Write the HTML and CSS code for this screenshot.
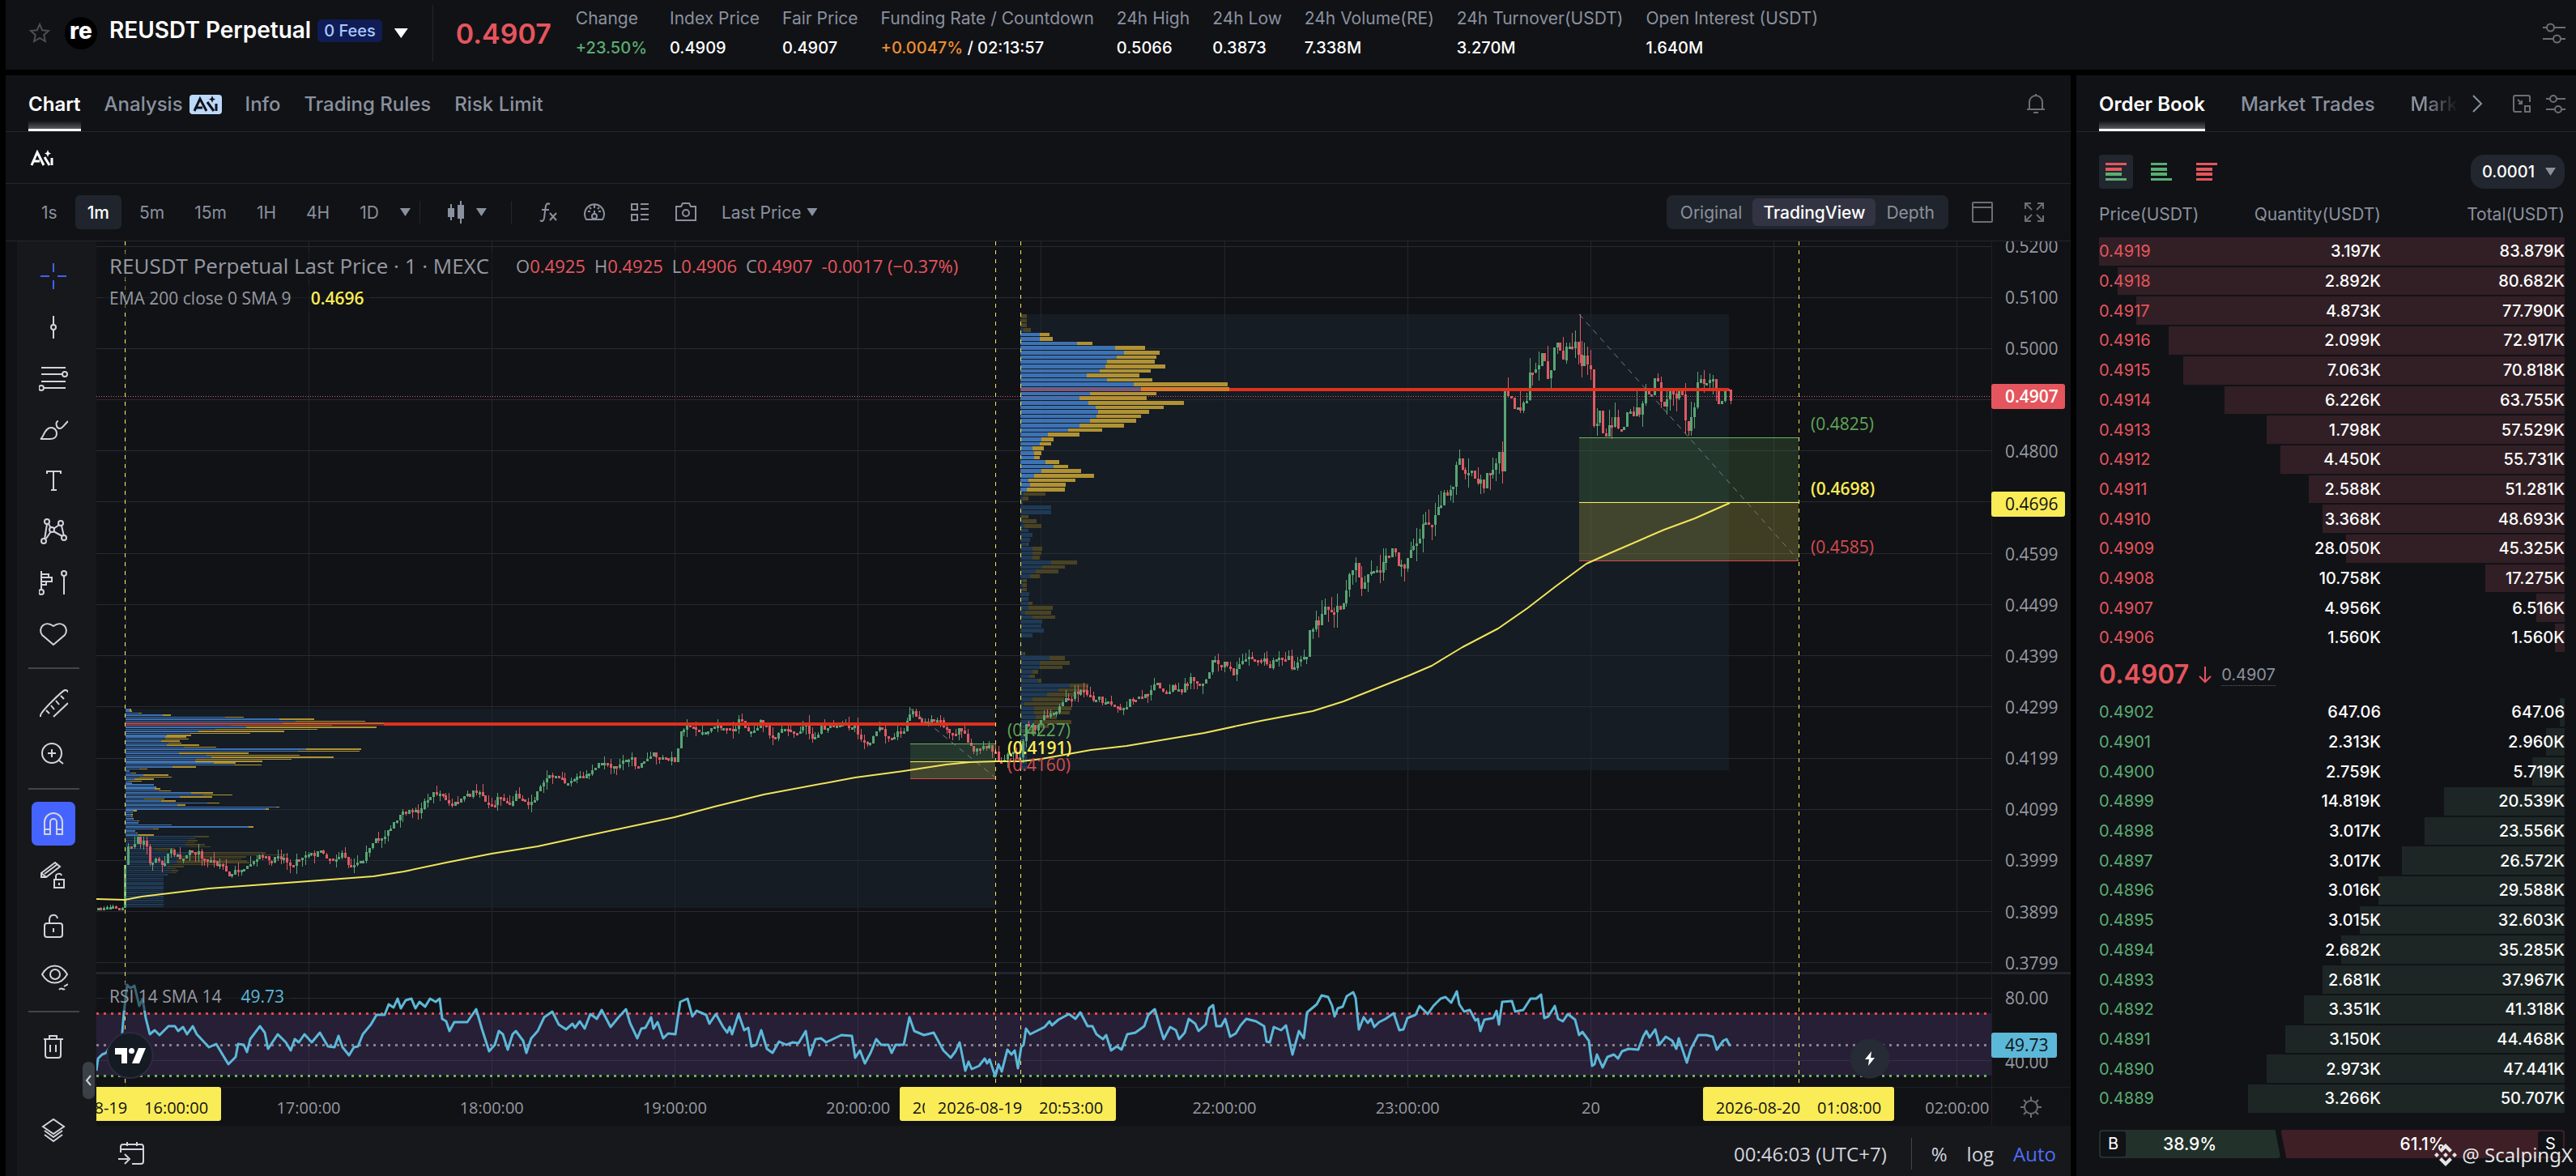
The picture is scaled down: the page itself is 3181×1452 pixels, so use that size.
FILE: index.html
```html
<!DOCTYPE html>
<html lang="en">
<head>
  <meta charset="utf-8">
  <title>REUSDT Perpetual</title>
  <link rel="stylesheet" href="styles.css">
</head>
<body>
  <header class="ticker">
    <button class="icon-btn star" aria-label="Favorite">
      <svg width="28" height="28" viewBox="0 0 28 28"><path d="M14 3l3.2 7.2 7.8.8-5.8 5.2 1.7 7.8-6.9-4-6.9 4 1.7-7.8L3 11l7.8-.8z" fill="none" stroke="#4b4e55" stroke-width="2"/></svg>
    </button>
    <span class="coin">re</span>
    <h1 class="pair">REUSDT Perpetual</h1>
    <span class="fees">0 Fees</span>
    <span class="caret caret-lg"></span>
    <span class="rule"></span>
    <strong class="last">0.4907</strong>
    <dl class="stats">
      <div><dt>Change</dt><dd class="up">+23.50%</dd></div>
      <div><dt>Index Price</dt><dd>0.4909</dd></div>
      <div><dt>Fair Price</dt><dd>0.4907</dd></div>
      <div><dt>Funding Rate / Countdown</dt><dd><span class="orange">+0.0047%</span> / 02:13:57</dd></div>
      <div><dt>24h High</dt><dd>0.5066</dd></div>
      <div><dt>24h Low</dt><dd>0.3873</dd></div>
      <div><dt>24h Volume(RE)</dt><dd>7.338M</dd></div>
      <div><dt>24h Turnover(USDT)</dt><dd>3.270M</dd></div>
      <div><dt>Open Interest (USDT)</dt><dd>1.640M</dd></div>
    </dl>
    <button class="icon-btn push" aria-label="Settings">
      <svg width="28" height="28" viewBox="0 0 28 28" fill="none" stroke="#6b6e76" stroke-width="2"><path d="M0 7h5M14 7h14M0 21h13M22 21h6"/><circle cx="9.500" cy="7" r="4.500"/><circle cx="17.500" cy="21" r="4.500"/></svg>
    </button>
  </header>

  <main class="layout">
    <section class="panel chart-panel">
      <nav class="tabs">
        <a href="#" class="tab active">Chart</a>
        <a href="#" class="tab">Analysis
          <svg class="ai-badge" width="40" height="24" viewBox="0 0 40 24"><rect width="40" height="24" rx="4" fill="#bcd9fb"/><path d="M6 20L13 5l8 15M9 16h7M22 9l8 11M33 11v9" fill="none" stroke="#111216" stroke-width="3"/><path d="M28 1l1.200 3.300L32 5.500l-2.800 1.200L28 10l-1.200-3.300L24 5.500l2.800-1.200z" fill="#111216"/></svg>
        </a>
        <a href="#" class="tab">Info</a>
        <a href="#" class="tab">Trading Rules</a>
        <a href="#" class="tab">Risk Limit</a>
        <button class="icon-btn push bell" aria-label="Alerts">
          <svg width="26" height="26" viewBox="0 0 26 26" fill="none" stroke="#6b6e76" stroke-width="2"><path d="M2 20h22M5 20V11a8 8 0 0 1 16 0v9M10 24h6M13 1v2"/></svg>
        </button>
      </nav>

      <div class="ai-row">
        <svg width="30" height="20" viewBox="0 0 30 20"><path d="M2 19L9 3l8 16M5 14h7M18 9l6 10M27 10v9" fill="none" stroke="#fff" stroke-width="3"/><path d="M22 0l1.200 3.300L26 4.500l-2.800 1.200L22 9l-1.200-3.300L18 4.500l2.800-1.200z" fill="#fff"/></svg>
      </div>

      <div class="toolbar">
        <div class="intervals">
          <button>1s</button>
          <button class="on">1m</button>
          <button>5m</button>
          <button>15m</button>
          <button>1H</button>
          <button>4H</button>
          <button>1D</button>
          <span class="caret"></span>
        </div>
        <span class="bar-rule"></span>
        <button class="kind" aria-label="Candle type">
          <svg width="22" height="28" viewBox="0 0 22 28" fill="#8a919e"><path d="M0 9h8v11H0zM3 4h2v20H3zM12 5h8v17h-8zM15 0h2v28h-2z"/></svg>
          <span class="caret"></span>
        </button>
        <span class="bar-rule"></span>
        <div class="tools">
          <button class="icon-btn" aria-label="Indicators"><svg width="24" height="26" viewBox="0 0 24 26" fill="none" stroke="#8a919e" stroke-width="2"><path d="M13 3c-4-2-5 1-5.500 5L6 20c-.5 4-3 5-5 3M3 10h9M13 14l8 9M21 14l-8 9"/></svg></button>
          <button class="icon-btn" aria-label="Gauge"><svg width="26" height="26" viewBox="0 0 26 26" fill="none" stroke="#8a919e" stroke-width="2"><path d="M3 22a12 12 0 1 1 20 0zM13 4v4M5 12h3M18 12h3M7 7l2 2M19 7l-2 2M13 11v4"/><circle cx="13" cy="18" r="3"/></svg></button>
          <button class="icon-btn" aria-label="List"><svg width="24" height="26" viewBox="0 0 24 26" fill="none" stroke="#8a919e" stroke-width="2"><path d="M2 3h7v7H2zM2 16h7v7H2zM13 3h10M13 9h10M13 16h10M13 22h10"/></svg></button>
          <button class="icon-btn" aria-label="Snapshot"><svg width="28" height="26" viewBox="0 0 28 26" fill="none" stroke="#8a919e" stroke-width="2"><path d="M2 6h6l2-4h8l2 4h6v17H2z"/><circle cx="14" cy="14" r="4"/></svg></button>
        </div>
        <button class="price-kind">Last Price <span class="caret"></span></button>
        <div class="segment push">
          <button>Original</button>
          <button class="on">TradingView</button>
          <button>Depth</button>
        </div>
        <button class="icon-btn window" aria-label="Window"><svg width="28" height="28" viewBox="0 0 28 28" fill="none" stroke="#6b6e76" stroke-width="2"><rect x="2" y="2" width="24" height="24" rx="1"/><path d="M2 8h24"/></svg></button>
        <button class="icon-btn" aria-label="Full screen"><svg width="26" height="26" viewBox="0 0 26 26" fill="none" stroke="#6b6e76" stroke-width="2"><path d="M2 9V2h7M2 2l8 8M24 9V2h-7M24 2l-8 8M2 17v7h7M2 24l8-8M24 17v7h-7M24 24l-8-8"/></svg></button>
      </div>

      <div class="work">
        <aside class="draw">
          <button aria-label="Cross" class="blue"><svg viewBox="0 0 36 36"><path d="M18 2v11M18 23v11M2 18h11M23 18h11"/></svg></button>
          <button aria-label="Trend line"><svg viewBox="0 0 36 36"><path d="M18 4v11M18 21v11"/><circle cx="18" cy="18" r="3"/></svg></button>
          <button aria-label="Fib"><svg viewBox="0 0 36 36"><path d="M3 5h30M3 13h26M3 22h30M6 30h27"/><circle cx="32" cy="13" r="3"/><circle cx="3" cy="30" r="3"/></svg></button>
          <button aria-label="Brush"><svg viewBox="0 0 36 36"><path d="M2 30c4-2 5-14 13-14 4 0 7 3 7 7 0 5-4 7-8 7zM24 8c-4 0-3 9 2 9 3 0 4-3 10-9"/></svg></button>
          <button aria-label="Text"><svg viewBox="0 0 36 36"><path d="M10 10V7h17v3M18 7v23M15 30h7"/></svg></button>
          <button aria-label="Patterns"><svg viewBox="0 0 36 36"><path d="M7 28L10 9M9 27l6-9M12 9l3 5M18 15l7-5M28 11l3 13M18 18l11 6"/><circle cx="10" cy="6" r="3"/><circle cx="6" cy="30" r="3"/><circle cx="16" cy="16" r="3"/><circle cx="27" cy="8" r="3"/><circle cx="31" cy="26" r="3"/></svg></button>
          <button aria-label="Forecast"><svg viewBox="0 0 36 36"><path d="M3 4v23M3 8h9v4H3M3 12h13v5H3M3 17h6v4H3M31 10v23"/><circle cx="3" cy="30" r="3"/><circle cx="31" cy="7" r="3"/></svg></button>
          <button aria-label="Icons"><svg viewBox="0 0 36 36"><path d="M18 32L4 20C-2 12 7 1 18 9c11-8 20 3 14 11z"/></svg></button>
          <hr>
          <button aria-label="Measure"><svg viewBox="0 0 36 36"><path d="M2 33c2-6 26-29 30-31 3 0 4 1 4 3M2 33v2M18 35l18-17M9 27l4 4M15 21l4 5M21 15l4 5M27 9l4 4"/></svg></button>
          <button aria-label="Zoom"><svg viewBox="0 0 36 36"><circle cx="16" cy="17" r="12"/><path d="M16 12v10M11 17h10M25 26l5 4"/></svg></button>
          <hr>
          <button aria-label="Magnet" class="fill"><svg viewBox="0 0 36 36"><path d="M7 31V16a11 11 0 0 1 22 0v15h-7V16a4 4 0 0 0-8 0v15zM7 25h7M22 25h7"/></svg></button>
          <button aria-label="Lock drawing"><svg viewBox="0 0 36 36"><path d="M3 21v-5L20 3l6 5L9 21zM7 17L23 5M3 16l6 5M19 24h12v10H19zM21 24v-4c0-4 6-4 7-1M25 28v3"/></svg></button>
          <button aria-label="Lock all"><svg viewBox="0 0 36 36"><rect x="7" y="15" width="22" height="17" rx="3"/><path d="M13 15v-4c0-8 9-8 10-2M18 21v5"/></svg></button>
          <button aria-label="Hide"><svg viewBox="0 0 36 36"><path d="M4 15c8-14 23-14 31 0-8 14-23 14-31 0zM25 34c3-4 5 1 7-1M31 30l5-3"/><circle cx="20" cy="15" r="6"/></svg></button>
          <hr>
          <button aria-label="Remove"><svg viewBox="0 0 36 36"><path d="M6 9h24M13 9V5h9v4M8 9v20q0 3 3 3h13q3 0 3-3V9M14 16v9M21 16v9"/></svg></button>
          <button aria-label="Object tree" class="tree"><svg viewBox="0 0 36 36"><path d="M5 14l13-9 13 9-13 9zM7 19l11 8 11-8M7 24l11 8 11-8"/></svg></button>
          <button class="handle" aria-label="Collapse"><svg viewBox="0 0 15 46"><path d="M10 17l-5 6 5 6"/></svg></button>
        </aside>

        <div class="chart-col">
          <div class="chart">
            <svg id="chart" viewBox="0 0 2438 1092"></svg>
            <div class="legend">
              <div class="legend-row">
                <span class="legend-title">REUSDT Perpetual Last Price · 1 · MEXC</span>
                <span class="ohlc">O<b>0.4925</b></span>
                <span class="ohlc">H<b>0.4925</b></span>
                <span class="ohlc">L<b>0.4906</b></span>
                <span class="ohlc">C<b>0.4907</b></span>
                <span class="ohlc"><b>-0.0017 (−0.37%)</b></span>
              </div>
              <div class="legend-row ema">EMA 200 close 0 SMA 9 <b>0.4696</b></div>
            </div>
            <div class="legend rsi">RSI 14 SMA 14 <b>49.73</b></div>
          </div>
          <footer class="chart-foot">
            <button class="icon-btn" aria-label="Go to date"><svg width="32" height="30" viewBox="0 0 32 30" fill="none" stroke="#d1d4dc" stroke-width="2"><path d="M3 14V7q0-3 3-3h22q3 0 3 3v18q0 3-3 3H17M3 10h28M11 1v5M23 1v5M0 22h12M8 16l6 6-6 6"/></svg></button>
            <button class="push clock">00:46:03 (UTC+7)</button>
            <span class="foot-rule"></span>
            <button>%</button>
            <button>log</button>
            <button class="auto">Auto</button>
          </footer>
        </div>
      </div>
    </section>

    <section class="panel book">
      <nav class="tabs">
        <a href="#" class="tab active">Order Book</a>
        <a href="#" class="tab">Market Trades</a>
        <a href="#" class="tab fade">Mark</a>
        <svg class="more" width="14" height="24" viewBox="0 0 14 24" fill="none" stroke="#8a919e" stroke-width="2"><path d="M1 2l10 10L1 22"/></svg>
        <button class="icon-btn push" aria-label="Pop out"><svg width="24" height="24" viewBox="0 0 24 24" fill="none" stroke="#6b6e76" stroke-width="2"><path d="M22 10V4q0-2-2-2H4Q2 2 2 4v16q0 2 2 2h8M7 7l5 5M12 8v4H8"/><rect x="16" y="15" width="6" height="7"/></svg></button>
        <button class="icon-btn" aria-label="Book settings"><svg width="24" height="24" viewBox="0 0 24 24" fill="none" stroke="#6b6e76" stroke-width="2"><path d="M0 6h5M13 6h11M0 19h11M19 19h5"/><circle cx="9" cy="6" r="4"/><circle cx="15" cy="19" r="4"/></svg></button>
      </nav>
      <div class="book-bar">
        <button class="view on" aria-label="Both sides"><svg width="26" height="24" viewBox="0 0 26 24"><path fill="#e5555d" d="M0 1h26v3H0zM0 7h20v4H0z"/><path fill="#5aad72" d="M0 13h20v4H0zM0 20h26v3H0z"/></svg></button>
        <button class="view" aria-label="Bids"><svg width="26" height="24" viewBox="0 0 26 24"><path fill="#5aad72" d="M0 1h20v3H0zM0 7h20v4H0zM0 13h20v4H0zM0 20h26v3H0z"/></svg></button>
        <button class="view" aria-label="Asks"><svg width="26" height="24" viewBox="0 0 26 24"><path fill="#e5555d" d="M0 1h26v3H0zM0 7h20v4H0zM0 13h20v4H0zM0 20h20v3H0z"/></svg></button>
        <label class="precision push">
          <select aria-label="Precision"><option>0.0001</option><option>0.001</option></select>
          <span class="caret"></span>
        </label>
      </div>
      <table class="orders">
        <thead>
          <tr><th>Price(USDT)</th><th>Quantity(USDT)</th><th>Total(USDT)</th></tr>
        </thead>
        <tbody>
          <tr class="mid" id="mid">
            <td colspan="3">
              <div class="mid-row">
                <strong>0.4907</strong>
                <svg width="16" height="22" viewBox="0 0 16 22" fill="none" stroke="#e5555d" stroke-width="2"><path d="M8 1v19M1 13l7 7 7-7"/></svg>
                <span class="fair">0.4907</span>
              </div>
            </td>
          </tr>
        </tbody>
      </table>
      <div class="ratio">
        <div class="buy"><span class="side">B</span><span class="pct">38.9%</span></div>
        <div class="sell"><span class="pct">61.1%</span><span class="side">S</span></div>
      </div>
      <div class="mark">
        <svg width="28" height="28" viewBox="0 0 28 28" fill="#e4e5e7"><path d="M14 0l8 8-3 3-5-5-5 5-3-3zM14 28l8-8-3-3-5 5-5-5-3 3zM3 11l3 3-3 3-3-3zM25 11l3 3-3 3-3-3zM14 11l3 3-3 3-3-3z"/></svg>
        @ ScalpingX
      </div>
    </section>
  </main>
  <script src="app.js"></script>
</body>
</html>
```
FILE: styles.css
```css
* {
  box-sizing: border-box;
}

body {
  margin: 0;
  min-height: 100vh;
  padding-left: 7px;
  display: flex;
  flex-direction: column;
  gap: 7px;
  background: #000;
  color: #fff;
  font-family: Inter, "Liberation Sans", sans-serif;
  font-size: 20px;
  overflow: hidden;
}

button {
  padding: 0;
  border: none;
  background: none;
  color: inherit;
  font: inherit;
  cursor: pointer;
}

a {
  color: inherit;
  text-decoration: none;
}

svg {
  display: block;
}

.push {
  margin-left: auto;
}

.icon-btn {
  flex: none;
}

.caret {
  width: 13px;
  height: 10px;
  background: #8a919e;
  clip-path: polygon(0 0, 100% 0, 50% 100%);
}

.caret-lg {
  width: 17px;
  height: 12px;
  background: #fff;
}

.up {
  color: #5aad72;
}

.orange {
  color: #ee8e2f;
}

/* ticker */
.ticker {
  height: 86px;
  flex: none;
  padding: 0 13px 4px 28px;
  display: flex;
  align-items: center;
  background: #111216;
}

.coin {
  width: 40px;
  height: 40px;
  margin: 0 15px 0 17px;
  border-radius: 50%;
  background: #000;
  font-size: 28px;
  font-weight: 800;
  line-height: 34px;
  text-align: center;
}

.pair {
  margin: 0 8px 8px 0;
  font-size: 28px;
  font-weight: 600;
  line-height: 34px;
}

.fees {
  padding: 0 8px;
  margin: 0 15px 6px 0;
  border-radius: 5px;
  background: #101c55;
  color: #a9c8ff;
  font-size: 20px;
  font-weight: 500;
  line-height: 28px;
}

.rule {
  width: 1px;
  height: 70px;
  margin: 0 28px 0 30px;
  background: #24262d;
}

.last {
  color: #e5555d;
  font-size: 34px;
  font-weight: 600;
}

.stats {
  display: flex;
  gap: 28px;
  margin: 0 0 0 30px;
}

.stats dt {
  margin-bottom: 12px;
  color: #8a919e;
  font-size: 21px;
  line-height: 25px;
}

.stats dd {
  margin: 0;
  font-weight: 500;
  line-height: 25px;
}

/* panels */
.layout {
  flex: 1;
  display: flex;
  gap: 7px;
}

.panel {
  background: #111216;
}

.chart-panel {
  flex: 1;
  min-width: 0;
  display: flex;
  flex-direction: column;
}

.tabs {
  height: 70px;
  flex: none;
  display: flex;
  align-items: center;
  gap: 29px;
  padding: 0 30px 0 28px;
  border-bottom: 1px solid #24262d;
  color: #8a919e;
  font-size: 24px;
  font-weight: 500;
}

.tab {
  height: 69px;
  display: flex;
  align-items: center;
  gap: 8px;
  padding-top: 5px;
  border-bottom: 3px solid transparent;
  white-space: nowrap;
}

.tab.active {
  border-bottom-color: #fff;
  background: linear-gradient(to top, rgba(255, 255, 255, 0.3), transparent 10px);
  color: #fff;
  font-weight: 600;
}

.ai-row {
  height: 64px;
  flex: none;
  display: flex;
  align-items: center;
  padding-left: 30px;
  border-bottom: 1px solid #24262d;
}

.toolbar {
  height: 71px;
  flex: none;
  display: flex;
  align-items: center;
  padding: 0 32px 0 29px;
  border-bottom: 1px solid #24262d;
  color: #8a919e;
  font-size: 21px;
}

.intervals {
  display: flex;
  align-items: center;
  gap: 7px;
}

.intervals button {
  height: 42px;
  padding: 0 15px;
  border-radius: 6px;
}

.intervals .caret {
  margin-left: 4px;
}

.intervals .on {
  background: #20252d;
  color: #fff;
  font-weight: 500;
}

.bar-rule {
  width: 1px;
  height: 28px;
  margin: 0 34px 0 11px;
  background: #24262d;
}

.kind {
  display: flex;
  align-items: center;
  gap: 13px;
  margin-right: 19px;
}

.tools {
  display: flex;
  gap: 31px;
  margin-right: 30px;
}

.price-kind {
  display: flex;
  align-items: center;
  gap: 7px;
}

.segment {
  display: flex;
  padding: 4px;
  border-radius: 8px;
  background: #20242c;
}

.segment button {
  height: 34px;
  padding: 0 13px;
  border-radius: 6px;
}

.segment .on {
  background: #333443;
  color: #fff;
  font-weight: 500;
}

.window {
  margin: 0 37px 0 28px;
}

/* drawing tools */
.work {
  flex: 1;
  display: flex;
  padding-left: 14px;
}

.draw {
  position: relative;
  width: 98px;
  padding: 16px 8px 0 0;
  display: flex;
  flex-direction: column;
  align-items: center;
  background: #17181c;
}

.draw button {
  width: 54px;
  height: 54px;
  margin-bottom: 9px;
  display: flex;
  align-items: center;
  justify-content: center;
  border-radius: 7px;
}

.draw svg {
  width: 36px;
  height: 36px;
  fill: none;
  stroke: #d1d4dc;
  stroke-width: 2;
}

.draw hr {
  width: 63px;
  height: 2px;
  margin: 6px 0 15px;
  border: none;
  background: #42454c;
}

.draw .blue svg {
  stroke: #3f62f5;
}

.draw .fill {
  background: #4564ff;
}

.draw .tree {
  margin-top: 40px;
}

.draw .handle {
  position: absolute;
  right: 2px;
  top: 1013px;
  width: 15px;
  height: 46px;
  background: #3b3f46;
}

.draw .handle svg {
  width: 15px;
  height: 46px;
}

/* chart */
.chart-col {
  flex: 1;
  min-width: 0;
  font-family: "Open Sans", "Noto Sans", sans-serif;
}

.chart {
  position: relative;
}

.chart text {
  font-family: "Open Sans", "Noto Sans", sans-serif;
  font-size: 20px;
  fill: #9699a1;
  dominant-baseline: central;
}

.chart .price,
.chart .tag {
  font-size: 21px;
}

.chart .tag,
.chart .stamp {
  fill: #111216;
  white-space: pre;
}

.chart .tag-last {
  fill: #fff;
  font-weight: 600;
}

.legend {
  position: absolute;
  left: 8px;
  top: 12px;
  color: #9699a1;
  font-size: 21px;
}

.legend b {
  font-weight: 400;
}

.legend-row {
  width: max-content;
  height: 36px;
  padding: 0 8px;
  display: flex;
  align-items: center;
  gap: 11px;
  background: rgba(17, 18, 22, 0.5);
}

.legend-title {
  margin-right: 22px;
  font-size: 26px;
}

.ohlc {
  font-size: 22px;
}

.ohlc b {
  color: #e5555d;
}

.ema {
  margin-top: 4px;
  gap: 24px;
}

.ema b {
  color: #faec57;
  font-weight: 600;
}

.rsi {
  top: 914px;
  height: 36px;
  padding: 0 8px;
  display: flex;
  align-items: center;
  gap: 24px;
  background: rgba(17, 18, 22, 0.5);
}

.rsi b {
  color: #5cb8d8;
}

.chart-foot {
  height: 62px;
  display: flex;
  align-items: center;
  padding: 6px 18px 0 27px;
  background: #17181c;
  color: #d1d4dc;
  font-size: 24px;
}

.chart-foot button {
  margin-left: 24px;
}

.chart-foot .icon-btn {
  margin-left: 0;
}

.chart-foot .clock {
  margin-left: auto;
}

.foot-rule {
  width: 1px;
  height: 39px;
  margin-left: 30px;
  background: #42454c;
}

.chart-foot .auto {
  color: #4f6ef7;
}

/* order book */
.book {
  position: relative;
  width: 617px;
  flex: none;
  padding: 0 14px 0 28px;
  display: flex;
  flex-direction: column;
}

.book .tabs {
  margin: 0 -14px 0 -28px;
  padding-right: 13px;
  gap: 18px;
}

.book .tab + .tab {
  margin-left: 26px;
}

.fade {
  width: 58px;
  overflow: hidden;
  -webkit-mask-image: linear-gradient(to right, #000 30%, transparent);
  mask-image: linear-gradient(to right, #000 30%, transparent);
}

.book-bar {
  height: 70px;
  display: flex;
  align-items: flex-end;
  gap: 14px;
}

.view {
  width: 42px;
  height: 42px;
  display: flex;
  align-items: center;
  justify-content: center;
  border-radius: 4px;
}

.view.on {
  background: #22262e;
}

.precision {
  height: 42px;
  padding: 0 11px 0 14px;
  display: flex;
  align-items: center;
  gap: 9px;
  border-radius: 16px;
  background: #22262e;
}

.precision select {
  width: 69px;
  padding: 0;
  border: none;
  appearance: none;
  background: none;
  color: #fff;
  font: inherit;
  font-weight: 500;
}

.orders {
  width: 100%;
  height: 1143px;
  table-layout: fixed;
  border-collapse: separate;
  border-spacing: 0 2px;
}

.orders th {
  height: 56px;
  padding: 3px 0 0;
  color: #8a919e;
  font-size: 21px;
  font-weight: 400;
  text-align: right;
}

.orders td {
  padding: 0;
  font-weight: 500;
  text-align: right;
}

.orders th:first-child,
.orders td:first-child {
  font-weight: 400;
  text-align: left;
}

.orders th:nth-child(2) {
  width: 225px;
}

.orders th:nth-child(3) {
  width: 227px;
}

.level {
  background: linear-gradient(to left, var(--tone) var(--depth), transparent var(--depth));
}

.ask {
  --tone: #311f25;
}

.bid {
  --tone: #1d2625;
}

.ask td:first-child {
  color: #e5555d;
}

.bid td:first-child {
  color: #5aad72;
}

.orders .mid td {
  height: 53px;
}

.mid-row {
  display: flex;
  align-items: center;
  gap: 12px;
  color: #e5555d;
}

.mid-row strong {
  font-size: 32px;
  font-weight: 600;
  line-height: 40px;
}

.mid-row .fair {
  border-bottom: 1px dotted #5c616b;
  color: #8a919e;
  line-height: 26px;
}

.ratio {
  display: flex;
  margin-top: 19px;
}

.buy,
.sell {
  height: 35px;
  padding: 2px;
  display: flex;
  align-items: center;
  border-radius: 4px;
}

.buy {
  width: 39%;
  background: #22322a;
  clip-path: polygon(0 0, 97% 0, 100% 100%, 0 100%);
}

.sell {
  flex: 1;
  background: #3e1f26;
  clip-path: polygon(0 0, 100% 0, 100% 100%, 2% 100%);
}

.side {
  width: 31px;
  line-height: 31px;
  border-radius: 3px;
  background: #111216;
  text-align: center;
}

.pct {
  flex: 1;
  font-size: 21px;
  font-weight: 500;
  text-align: center;
}

.buy .pct {
  padding-right: 31px;
}

.sell .pct {
  padding-left: 31px;
}

.mark {
  position: absolute;
  right: 4px;
  bottom: 10px;
  display: flex;
  align-items: center;
  gap: 6px;
  color: #e4e5e7;
  font-family: "Noto Sans", sans-serif;
  font-size: 24px;
  line-height: 32px;
}
```
FILE: app.js
```js
const asks = [
  ['0.4919', '3.197K', '83.879K', 100], ['0.4918', '2.892K', '80.682K', 96],
  ['0.4917', '4.873K', '77.790K', 92], ['0.4916', '2.099K', '72.917K', 85],
  ['0.4915', '7.063K', '70.818K', 82], ['0.4914', '6.226K', '63.755K', 73],
  ['0.4913', '1.798K', '57.529K', 64], ['0.4912', '4.450K', '55.731K', 61],
  ['0.4911', '2.588K', '51.281K', 55], ['0.4910', '3.368K', '48.693K', 52],
  ['0.4909', '28.050K', '45.325K', 47], ['0.4908', '10.758K', '17.275K', 17],
  ['0.4907', '4.956K', '6.516K', 6], ['0.4906', '1.560K', '1.560K', 2]
];

const bids = [
  ['0.4902', '647.06', '647.06', 1], ['0.4901', '2.313K', '2.960K', 4],
  ['0.4900', '2.759K', '5.719K', 7], ['0.4899', '14.819K', '20.539K', 26],
  ['0.4898', '3.017K', '23.556K', 30], ['0.4897', '3.017K', '26.572K', 35],
  ['0.4896', '3.016K', '29.588K', 40], ['0.4895', '3.015K', '32.603K', 44],
  ['0.4894', '2.682K', '35.285K', 48], ['0.4893', '2.681K', '37.967K', 52],
  ['0.4892', '3.351K', '41.318K', 56], ['0.4891', '3.150K', '44.468K', 60],
  ['0.4890', '2.973K', '47.441K', 64], ['0.4889', '3.266K', '50.707K', 68]
];

function levels(rows, side) {
  return rows.map(([price, qty, total, depth]) => `
    <tr class="level ${side}" style="--depth: ${depth}%">
      <td>${price}</td><td>${qty}</td><td>${total}</td>
    </tr>`).join('');
}

const mid = document.getElementById('mid');
mid.insertAdjacentHTML('beforebegin', levels(asks, 'ask'));
mid.insertAdjacentHTML('afterend', levels(bids, 'bid'));

// chart: shapes are kept as strings and written to the svg once
const LEFT = 119;
const TOP = 298;
const AXIS = 2340;
const BOTTOM = 1044;
const out = [];

function rect(x, y, w, h, fill, extra = '') {
  out.push(`<rect x="${x}" y="${y}" width="${w}" height="${h}" fill="${fill}" shape-rendering="crispEdges" ${extra}/>`);
}

function line(x1, y1, x2, y2, stroke, extra = '') {
  out.push(`<line x1="${x1}" y1="${y1}" x2="${x2}" y2="${y2}" stroke="${stroke}" ${extra}/>`);
}

function text(x, y, str, extra = '') {
  out.push(`<text x="${x}" y="${y}" ${extra}>${str}</text>`);
}

const priceY = p => 6 + (0.52 - p) * 6315;

// areas covered by the two volume profiles
rect(36, 577, 1074, 246, '#151c23');
rect(1141, 90, 875, 563, '#151c23');

// grid
const hours = ['17:00:00', '18:00:00', '19:00:00', '20:00:00', '', '22:00:00', '23:00:00', '20', '', '02:00:00'];
const prices = [0.52, 0.51, 0.5, 0.49, 0.48, 0.47, 0.4599, 0.4499, 0.4399, 0.4299, 0.4199, 0.4099, 0.3999, 0.3899, 0.3799];
const crisp = 'shape-rendering="crispEdges"';
prices.forEach(p => line(0, priceY(p), AXIS, priceY(p), '#272a33', crisp));
hours.forEach((h, i) => line(262 + i * 226.2, 0, 262 + i * 226.2, BOTTOM, '#23262e', crisp));
line(36, 0, 36, BOTTOM, '#23262e', crisp);

// volume profiles, [up, up + down] widths from the top row to the bottom row
const profileA = [
  [5, 7], [5, 8], [16, 20], [46, 56], [123, 146], [190, 233], [210, 296], [194, 319], [130, 255], [149, 310],
  [111, 237], [90, 196], [79, 154], [51, 81], [49, 75], [49, 78], [44, 67], [53, 69], [51, 91], [72, 112],
  [223, 291], [213, 289], [66, 152], [100, 215], [106, 257], [87, 205], [86, 169], [109, 136], [134, 168], [58, 87],
  [17, 27], [5, 5], [7, 13], [22, 53], [17, 57], [11, 35], [4, 20], [8, 8], [35, 35], [37, 38],
  [36, 43], [41, 56], [81, 108], [96, 132], [67, 107], [23, 48], [44, 62], [101, 116], [64, 74], [186, 190],
  [173, 177], [10, 14], [8, 9], [7, 9], [7, 9], [9, 10], [15, 17], [16, 16], [57, 57], [152, 158],
  [34, 41], [12, 12], [13, 15], [16, 35], [85, 103], [79, 86], [77, 89], [74, 86], [74, 98], [79, 105],
  [36, 61], [39, 53], [79, 173], [84, 201], [66, 149], [63, 143], [63, 150], [64, 153], [59, 124], [52, 72],
  [51, 62], [57, 65], [56, 63], [50, 52]
];
while (profileA.length < 100) profileA.push([47, 47]);

const profileB = [
  [0, 8], [0, 8], [0, 8], [4, 13], [24, 36], [24, 40], [70, 89], [117, 154], [128, 172], [119, 168],
  [107, 166], [105, 179], [98, 161], [82, 147], [107, 163], [140, 256], [149, 258], [86, 168], [73, 156], [84, 202],
  [93, 177], [96, 159], [94, 149], [86, 143], [73, 128], [59, 101], [34, 73], [26, 41], [24, 38], [15, 29],
  [17, 26], [17, 24], [31, 48], [41, 59], [26, 75], [17, 91], [10, 68], [12, 56], [8, 55], [4, 31],
  [3, 10], [3, 3], [38, 38], [38, 38], [1, 10], [3, 20], [5, 26], [10, 10], [15, 15], [12, 12],
  [8, 10], [15, 27], [15, 26], [15, 24], [38, 70], [27, 55], [19, 47], [12, 24], [3, 8], [3, 8],
  [3, 8], [11, 11], [10, 10], [10, 15], [10, 40], [6, 38], [15, 43], [27, 27], [26, 26], [29, 29],
  [15, 15], [1, 1], [1, 1], [1, 1], [4, 6], [36, 55], [24, 61], [24, 52], [15, 22], [11, 18],
  [22, 26], [61, 84], [47, 82], [33, 68], [15, 54], [5, 53], [17, 63], [17, 61], [19, 45], [17, 63],
  [15, 35], [3, 19], [8, 8], [8, 8], [8, 8], [8, 8], [8, 8], [8, 8], [8, 8], [8, 8]
];

function profile(rows, x, y, step, gap, from, to) {
  rows.forEach(([up, all], i) => {
    const strong = i >= from && i < to;
    const ry = y + i * step;
    rect(x, ry, up, step - gap, strong ? '#3d72b4' : '#1f3a56');
    if (all > up) rect(x + up, ry, all - up, step - gap, strong ? '#b09235' : '#494325');
  });
}

profile(profileA, 36, 577, 2.46, 0.9, 0, 64);
profile(profileB, 1141, 90, 5.63, 1, 4, 39);
rect(36, 594, 320, 4, '#e0301e', 'opacity="0.5"');

// candles
const track = [
  119,1123, 138,1119, 153,1122, 154,1070, 159,1040, 165,1046, 169,1033, 175,1047, 179,1033, 185,1069,
  192,1063, 199,1069, 211,1053, 224,1058, 239,1049, 253,1062, 269,1065, 284,1081, 297,1070, 307,1073,
  323,1053, 333,1068, 345,1057, 360,1067, 375,1055, 400,1053, 410,1062, 421,1055, 432,1067, 448,1060,
  465,1037, 480,1027, 493,1010, 506,998, 515,1003, 530,982, 544,979, 557,995, 570,987, 593,974,
  605,998, 619,983, 628,993, 637,982, 652,995, 668,972, 683,955, 698,964, 724,959, 730,948,
  745,943, 756,948, 776,935, 788,947, 806,932, 822,939, 835,937, 841,903, 852,895, 860,902,
  867,900, 875,903, 886,894, 898,903, 907,901, 914,885, 926,907, 940,890, 955,912, 965,901,
  977,907, 995,895, 1003,914, 1014,898, 1033,897, 1056,895, 1059,911, 1072,917, 1084,900, 1097,908,
  1117,903, 1124,877, 1135,888, 1146,892, 1159,889, 1177,906, 1186,895, 1195,920, 1202,927, 1217,920,
  1229,927, 1232,940, 1238,942, 1245,925, 1254,933, 1257,952, 1261,925, 1267,894, 1280,898, 1289,885,
  1302,881, 1315,864, 1335,853, 1345,862, 1353,860, 1363,869, 1373,871, 1385,881, 1393,866, 1414,860,
  1426,841, 1438,858, 1446,848, 1458,854, 1471,837, 1481,844, 1490,835, 1497,814, 1506,827, 1514,818,
  1522,831, 1541,812, 1560,815, 1568,823, 1576,813, 1590,812, 1597,828, 1603,812, 1613,816, 1616,783,
  1627,768, 1635,747, 1643,747, 1650,758, 1660,737, 1666,711, 1673,697, 1680,732, 1688,704, 1699,714,
  1710,695, 1722,680, 1728,698, 1737,697, 1740,674, 1752,663, 1756,645, 1766,652, 1774,630, 1784,611,
  1793,605, 1801,569, 1809,588, 1815,582, 1823,589, 1831,601, 1838,580, 1847,579, 1851,558, 1855,575,
  1856,488, 1863,493, 1874,506, 1886,502, 1889,458, 1896,459, 1905,437, 1911,466, 1921,427, 1930,448,
  1937,422, 1943,436, 1947,424, 1951,454, 1957,443, 1964,462, 1966,527, 1970,527, 1974,504, 1982,548,
  1987,523, 1993,519, 2001,531, 2013,507, 2026,513, 2030,481, 2039,485, 2046,466, 2052,500, 2061,481,
  2071,500, 2075,481, 2084,538, 2090,508, 2096,479, 2106,469, 2117,477, 2122,500, 2128,481, 2132,479, 2137,490
];

function trackAt(x) {
  let i = 0;
  while (i < track.length - 4 && track[i + 2] < x) i += 2;
  const t = Math.min(1, (x - track[i]) / (track[i + 2] - track[i]));
  return track[i + 1] + (track[i + 3] - track[i + 1]) * t;
}

let seed = 7;
function rnd() {
  seed = (seed * 16807) % 2147483647;
  return seed / 2147483647;
}

let prev = 1123;
for (let x = 120.5; x < 2138; x += 3.77) {
  const amp = x < 155 ? 3 : x < 1620 ? 10 : 20;
  const close = trackAt(x) + (rnd() - 0.5) * amp * 0.8;
  const high = Math.min(prev, close) - (rnd() > 0.4 ? rnd() * amp : 0);
  const low = Math.max(prev, close) + (rnd() > 0.4 ? rnd() * amp : 0);
  const color = close <= prev ? '#58a574' : '#de5a63';
  const cx = Math.round(x) - LEFT;
  rect(cx - 1, Math.round(Math.min(prev, close)) - TOP, 3, Math.max(3, Math.round(Math.abs(prev - close))), color);
  rect(cx, Math.round(high) - TOP, 1, Math.max(1, Math.round(low - high)), color);
  prev = close;
}
rect(1832, 90, 1, 60, '#de5a63');

rect(1141, 181, 875, 4, '#e0301e');
rect(1141, 180, 149, 5, '#3d72b4', 'opacity="0.6"');
rect(1290, 180, 109, 5, '#e08a2a', 'opacity="0.8"');
rect(355, 594, 755, 4, '#e0301e');

// retracement boxes
function retrace(x1, x2, top, middle, low) {
  rect(x1, top, x2 - x1, middle - top, '#5fa556', 'opacity="0.2"');
  rect(x1, middle, x2 - x1, low - middle, '#faec57', 'opacity="0.2"');
  rect(x1, top, x2 - x1, 1, '#6cb35c');
  rect(x1, middle, x2 - x1, 1, '#faec57');
  rect(x1, low, x2 - x1, 1, '#d64a4f');
}
retrace(1005, 1110, 620, 642, 663);
retrace(1831, 2102, 242, 322, 394);
line(1831, 90, 2102, 394, '#7b7b84', 'stroke-dasharray="7 6"');
line(1005, 577, 1110, 662, '#7b7b84', 'stroke-dasharray="7 6"');

// EMA 200
const ema = [
  119,1110, 154,1111, 175,1107, 258,1097, 381,1088, 461,1082, 499,1076, 551,1065, 607,1054, 664,1045,
  724,1032, 833,1009, 882,996, 943,981, 1056,960, 1116,952, 1168,944, 1198,941, 1230,940, 1261,940,
  1286,937, 1347,926, 1391,921, 1487,905, 1557,890, 1621,878, 1659,866, 1740,834, 1768,822, 1806,799,
  1850,776, 1886,751, 1921,724, 1959,696, 1988,683, 2055,654, 2093,640, 2136,621
];

function polyline(list, stroke, width) {
  const pts = list.map((v, i) => v - (i % 2 ? TOP : LEFT)).join(' ');
  out.push(`<polyline points="${pts}" fill="none" stroke="${stroke}" stroke-width="${width}" stroke-linejoin="round"/>`);
}
polyline(ema, '#f0e45c', 2);

// last price
line(0, 191.5, AXIS, 191.5, '#e5555d', 'stroke-dasharray="1 2"');

// RSI pane
rect(0, 902, 2438, 3, '#24262d');
rect(0, 953, AXIS, 77, '#261f36');
line(0, 934.5, AXIS, 934.5, '#272a33');
line(0, 1011.5, AXIS, 1011.5, '#33304a');
for (let i = 0; i < 10; i++) line(262 + i * 226.2, 953, 262 + i * 226.2, 1030, '#342f45', crisp);
line(0, 953.5, AXIS, 953.5, '#e5484d', 'stroke-width="3" stroke-dasharray="3 6"');
line(0, 992.5, AXIS, 992.5, '#85818f', 'stroke-width="3" stroke-dasharray="3 6"');
line(0, 1030.5, AXIS, 1030.5, '#6cb35c', 'stroke-width="3" stroke-dasharray="3 6"');

[35.5, 1110.5, 1141.5, 2102.5].forEach(x => line(x, 0, x, BOTTOM, '#f5e957', 'stroke-dasharray="5 6"'));

const rsi = [
  119,1322, 121,1307, 126,1302, 131,1300, 137,1290, 150,1287, 153,1250, 157,1216, 161,1220, 166,1217,
  172,1242, 176,1233, 180,1257, 185,1277, 191,1272, 197,1278, 208,1267, 216,1267, 220,1273, 226,1268,
  231,1277, 238,1267, 243,1277, 258,1293, 267,1289, 282,1314, 291,1305, 294,1289, 301,1290, 305,1299,
  309,1283, 321,1267, 327,1275, 331,1295, 343,1277, 353,1287, 359,1297, 364,1283, 369,1287, 376,1277,
  385,1287, 395,1275, 405,1292, 413,1293, 418,1279, 423,1293, 431,1303, 437,1293, 442,1292, 448,1277,
  458,1265, 465,1253, 475,1253, 480,1240, 486,1244, 491,1233, 495,1245, 501,1235, 508,1233, 513,1245,
  518,1237, 525,1243, 531,1233, 538,1237, 543,1233, 546,1258, 551,1261, 555,1273, 561,1262, 577,1262,
  588,1246, 595,1270, 604,1298, 611,1290, 616,1273, 621,1277, 627,1296, 633,1277, 637,1273, 646,1285,
  650,1300, 656,1282, 664,1273, 672,1256, 682,1249, 690,1265, 699,1271, 707,1264, 710,1269, 716,1261,
  722,1270, 729,1252, 737,1258, 743,1247, 754,1268, 763,1257, 773,1246, 778,1263, 787,1282, 792,1270,
  797,1269, 804,1256, 807,1270, 812,1262, 819,1282, 825,1276, 834,1277, 840,1237, 849,1233, 855,1255,
  860,1248, 872,1253, 876,1264, 884,1252, 893,1268, 898,1275, 901,1268, 904,1277, 912,1252, 919,1272,
  924,1269, 928,1292, 934,1290, 940,1272, 947,1295, 954,1300, 962,1286, 971,1290, 979,1287, 986,1288,
  995,1273, 1000,1303, 1007,1283, 1014,1282, 1020,1287, 1039,1278, 1052,1279, 1056,1306, 1062,1297, 1068,1313,
  1075,1300, 1082,1283, 1088,1290, 1097,1290, 1101,1300, 1106,1290, 1116,1290, 1123,1256, 1129,1273, 1141,1278,
  1153,1275, 1165,1297, 1174,1306, 1180,1298, 1185,1287, 1192,1322, 1196,1311, 1200,1320, 1209,1316, 1216,1307,
  1219,1313, 1222,1308, 1229,1329, 1233,1314, 1237,1323, 1244,1296, 1249,1302, 1253,1297, 1257,1319, 1261,1293,
  1264,1290, 1267,1270, 1272,1277, 1280,1273, 1290,1268, 1296,1261, 1299,1266, 1307,1259, 1320,1252, 1328,1258,
  1334,1250, 1343,1267, 1349,1267, 1354,1277, 1362,1283, 1366,1278, 1372,1297, 1379,1292, 1385,1296, 1392,1277,
  1402,1275, 1413,1267, 1418,1253, 1426,1246, 1432,1267, 1437,1283, 1445,1268, 1452,1272, 1456,1283, 1463,1275,
  1468,1258, 1476,1264, 1480,1273, 1489,1265, 1493,1245, 1498,1241, 1502,1267, 1508,1267, 1513,1258, 1519,1280,
  1526,1276, 1532,1266, 1539,1258, 1551,1261, 1561,1267, 1564,1286, 1568,1287, 1573,1268, 1582,1272, 1588,1266,
  1596,1302, 1604,1273, 1610,1282, 1614,1250, 1626,1240, 1632,1229, 1640,1231, 1645,1242, 1648,1255, 1652,1245,
  1658,1243, 1663,1230, 1671,1225, 1674,1232, 1678,1271, 1684,1256, 1689,1263, 1693,1258, 1697,1268, 1703,1262,
  1711,1258, 1721,1251, 1728,1272, 1733,1271, 1738,1257, 1748,1253, 1753,1242, 1763,1252, 1770,1242, 1779,1233,
  1785,1231, 1792,1238, 1799,1224, 1802,1240, 1808,1249, 1815,1247, 1822,1260, 1825,1258, 1828,1273, 1833,1259,
  1844,1257, 1848,1248, 1851,1265, 1855,1237, 1867,1236, 1871,1249, 1881,1247, 1890,1233, 1897,1233, 1903,1228,
  1907,1257, 1912,1255, 1920,1242, 1924,1258, 1930,1261, 1936,1252, 1945,1259, 1950,1278, 1954,1274, 1962,1285,
  1966,1316, 1969,1314, 1972,1302, 1979,1318, 1985,1305, 1993,1302, 1998,1307, 2003,1298, 2011,1295, 2023,1296,
  2029,1280, 2033,1273, 2037,1281, 2044,1271, 2049,1290, 2057,1280, 2065,1285, 2070,1295, 2073,1282, 2083,1312,
  2088,1295, 2097,1278, 2107,1278, 2115,1280, 2120,1296, 2128,1285, 2132,1283, 2136,1291
];
polyline(rsi, '#5cb8d8', 3);

// retracement captions
const caption = (x, y, str, fill, bold) =>
  text(x, y, str, `style="fill: ${fill}; font-size: 21px; font-weight: ${bold ? 600 : 400}"`);
caption(1125, 603, '(0.4227)', '#5fa556');
caption(1125, 625, '(0.4191)', '#faec57', true);
caption(1125, 646, '(0.4160)', '#d64a4f');
caption(2117, 225, '(0.4825)', '#5fa556');
caption(2117, 305, '(0.4698)', '#faec57', true);
caption(2117, 377, '(0.4585)', '#d64a4f');

// badges on the plot
out.push('<circle cx="41.500" cy="1005" r="28" fill="#141b22" stroke="#2d2a40" stroke-width="2"/>');
out.push('<path d="M23 996h15v19h-7v-11h-8zM52 996h9l-8 19h-9z" fill="#fff"/><circle cx="43.500" cy="999.500" r="3.500" fill="#fff"/>');
out.push('<circle cx="2190" cy="1009" r="24.500" fill="#262b35"/><path d="M2192 1000l-8 10h5l-1 8 8-10h-5z" fill="#fff"/>');

// axes
rect(AXIS, 0, 1, 1092, '#1e2026');
rect(0, BOTTOM, 2438, 1, '#1e2026');
prices.forEach(p => {
  if (p !== 0.49 && p !== 0.47) text(2357, priceY(p), p.toFixed(4), 'class="price"');
});
text(2357, 934, '80.00', 'class="price"');
text(2357, 1013, '40.00', 'class="price"');

function tag(y, w, fill, str, cls) {
  out.push(`<rect x="${AXIS}" y="${y}" width="${w}" height="31" rx="3" fill="${fill}"/>`);
  text(2357, y + 15, str, `class="tag ${cls}"`);
}
tag(176, 91, '#e5555d', '0.4907', 'tag-last');
tag(309, 91, '#faec57', '0.4696', '');
tag(977, 81, '#5cb8d8', '49.73', '');

hours.forEach((h, i) => text(262 + i * 226.2, 1069, h, 'text-anchor="middle"'));

function stamp(x, str) {
  out.push(`<rect x="${x - 118}" y="${BOTTOM}" width="236" height="42" rx="3" fill="#faec57"/>`);
  text(x, 1069, str, 'class="stamp" text-anchor="middle"');
}
stamp(36, '2026-08-19    16:00:00');
stamp(1110, '2026-08-19    20:49:00');
stamp(1141, '2026-08-19    20:53:00');
stamp(2102, '2026-08-20    01:08:00');

out.push('<g fill="none" stroke="#6b6e76" stroke-width="2"><circle cx="2389" cy="1069" r="8"/><path d="M2389 1056v5M2389 1077v5M2376 1069h5M2397 1069h5M2380 1060l3 3M2398 1060l-3 3M2380 1078l3-3M2398 1078l-3-3"/></g>');

document.getElementById('chart').innerHTML = out.join('');
```
